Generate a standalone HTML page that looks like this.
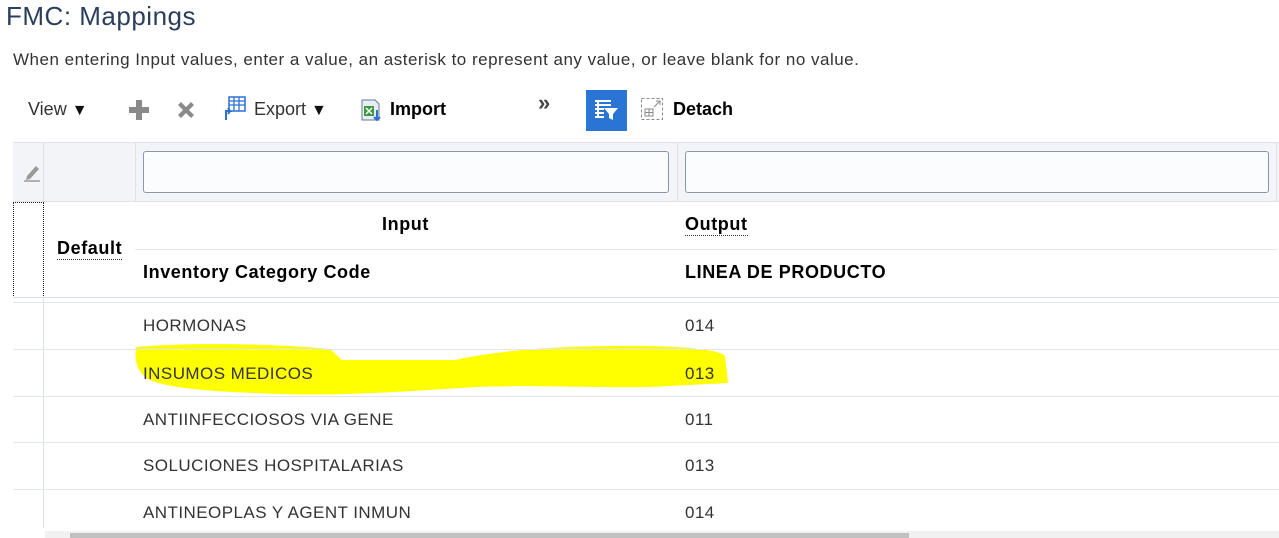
<!DOCTYPE html>
<html><head><meta charset="utf-8"><style>
*{margin:0;padding:0;box-sizing:border-box}
body{width:1279px;height:538px;background:#fff;position:relative;overflow:hidden;font-family:"Liberation Sans",Arial,sans-serif;color:#333}
.a{position:absolute;white-space:nowrap}
.hl{position:absolute;height:1px;background:#e3e7ec}
.vl{position:absolute;width:1px;background:#dde2e8}
.b{font-weight:bold;color:#000}
.hd{font-size:18px;letter-spacing:0.6px}
.d{font-size:17px;letter-spacing:0.45px;color:#333}
</style></head><body>
<div class="a" style="left:6px;top:1px;font-size:26px;letter-spacing:0.5px;color:#2b3f5c">FMC: Mappings</div>
<div class="a" style="left:13px;top:50px;font-size:17px;letter-spacing:0.5px;color:#333">When entering Input values, enter a value, an asterisk to represent any value, or leave blank for no value.</div>

<!-- toolbar -->
<div class="a" style="left:28px;top:99px;font-size:18px;color:#333">View <span style="font-size:16px;color:#111">&#9660;</span></div>
<svg class="a" style="left:127px;top:98px" width="24" height="24" viewBox="0 0 24 24"><path d="M9 2h6v7h7v6h-7v7H9v-7H2V9h7z" fill="#8a8a8a"/></svg>
<svg class="a" style="left:175px;top:99px" width="22" height="22" viewBox="0 0 22 22"><path d="M3 6l3-3 5 5 5-5 3 3-5 5 5 5-3 3-5-5-5 5-3-3 5-5z" fill="#8a8a8a"/></svg>
<svg class="a" style="left:223px;top:96px" width="24" height="26" viewBox="0 0 24 26"><rect x="6" y="1" width="16" height="14" fill="#fff" stroke="#2b6fd6" stroke-width="1.5"/><path d="M6 5h16M6 9h16M11 1v14M16 1v14" stroke="#2b6fd6" stroke-width="1.3"/><path d="M3 24v-9h4l-2-3m2 3l-2 3" stroke="#2b6fd6" stroke-width="2" fill="none"/></svg>
<div class="a" style="left:254px;top:99px;font-size:18px;color:#333">Export <span style="font-size:16px;color:#111">&#9660;</span></div>
<svg class="a" style="left:360px;top:98px" width="24" height="26" viewBox="0 0 24 26"><path d="M2 2h13l4 4v16H2z" fill="#e8eef5" stroke="#6a7a90"/><rect x="4" y="8" width="10" height="10" fill="#3f9a3f"/><path d="M6 10l6 6M12 10l-6 6" stroke="#fff" stroke-width="1.5"/><path d="M17 12v10m-3-3l3 3 3-3" stroke="#2b6fd6" stroke-width="2" fill="none"/></svg>
<div class="a b" style="left:390px;top:99px;font-size:18px">Import</div>
<div class="a" style="left:538px;top:90px;font-size:22px;color:#444;font-weight:bold">&#187;</div>
<div class="a" style="left:586px;top:90px;width:41px;height:41px;background:#2a74d6"></div>
<svg class="a" style="left:594px;top:99px" width="26" height="22" viewBox="0 0 26 22"><path d="M1 2h16M1 6h16M1 10h9M1 14h9M1 18h9M4 2v16" stroke="#fff" stroke-width="2"/><path d="M10 9h14l-5 6v6l-4-2v-4z" fill="#fff"/></svg>
<svg class="a" style="left:640px;top:97px" width="24" height="24" viewBox="0 0 24 24"><rect x="1.5" y="1.5" width="21" height="21" fill="none" stroke="#8a8a8a" stroke-dasharray="3 2"/><rect x="5" y="12" width="8" height="7" fill="none" stroke="#8a8a8a"/><path d="M5 15.5h8M9 12v7M14 10l6-6m-4 0h4v4" stroke="#8a8a8a" fill="none"/></svg>
<div class="a b" style="left:673px;top:99px;font-size:18px">Detach</div>

<!-- filter row -->
<div class="a" style="left:13px;top:142px;width:1266px;height:60px;background:#f2f4f7;border-top:1px solid #dfe3e8;border-bottom:1px solid #dfe3e8"></div>
<div class="vl" style="left:43px;top:142px;height:60px"></div>
<div class="vl" style="left:135px;top:142px;height:60px"></div>
<div class="vl" style="left:677px;top:142px;height:60px"></div>
<div class="vl" style="left:1276px;top:142px;height:60px"></div>
<svg class="a" style="left:22px;top:161px" width="20" height="22" viewBox="0 0 20 22"><path d="M5 15l9-10 3 3-9 10-4 1z" fill="#9a9a9a"/><path d="M2 20h16" stroke="#9a9a9a" stroke-width="1.5"/></svg>
<div class="a" style="left:143px;top:151px;width:526px;height:42px;background:#fbfcfd;border:1px solid #8a97a6;border-radius:3px"></div>
<div class="a" style="left:685px;top:151px;width:584px;height:42px;background:#fbfcfd;border:1px solid #8a97a6;border-radius:3px"></div>

<!-- header -->
<div class="a" style="left:13px;top:202px;width:31px;height:96px;border:1px dotted #222"></div>
<div class="a b hd" style="left:57px;top:238px;border-bottom:1px dotted #333;line-height:21px">Default</div>
<div class="a b hd" style="left:382px;top:214px">Input</div>
<div class="a b hd" style="left:685px;top:214px;border-bottom:1px dotted #333;line-height:21px">Output</div>
<div class="hl" style="left:135px;top:249px;width:1142px"></div>
<div class="a b hd" style="left:143px;top:262px">Inventory Category Code</div>
<div class="a b hd" style="left:685px;top:262px">LINEA DE PRODUCTO</div>
<div class="hl" style="left:13px;top:297px;width:1266px;background:#d8dde3"></div>
<div class="hl" style="left:13px;top:302px;width:1266px"></div>
<div class="vl" style="left:43px;top:297px;height:231px"></div>

<!-- highlight -->
<svg class="a" style="left:130px;top:340px" width="600" height="62" viewBox="0 0 600 62"><path d="M6 7 C60 2,150 4,200 9 L212 20 L325 20 C380 8,450 5,520 6 C560 7,590 10,595 16 L598 43 L520 47 C450 48,380 44,330 48 C270 52,200 56,150 54 C90 52,40 49,20 40 C8 34,4 22,6 7z" fill="#ffff00"/></svg>

<!-- rows -->
<div class="hl" style="left:13px;top:349px;width:1266px"></div>
<div class="hl" style="left:13px;top:396px;width:1266px"></div>
<div class="hl" style="left:13px;top:442px;width:1266px"></div>
<div class="hl" style="left:13px;top:489px;width:1266px"></div>
<div class="a d" style="left:143px;top:316px">HORMONAS</div><div class="a d" style="left:685px;top:316px">014</div>
<div class="a d" style="left:143px;top:364px">INSUMOS MEDICOS</div><div class="a d" style="left:685px;top:364px">013</div>
<div class="a d" style="left:143px;top:410px">ANTIINFECCIOSOS VIA GENE</div><div class="a d" style="left:685px;top:410px">011</div>
<div class="a d" style="left:143px;top:456px">SOLUCIONES HOSPITALARIAS</div><div class="a d" style="left:685px;top:456px">013</div>
<div class="a d" style="left:143px;top:503px">ANTINEOPLAS Y AGENT INMUN</div><div class="a d" style="left:685px;top:503px">014</div>

<!-- scrollbar -->
<div class="a" style="left:45px;top:531px;width:1234px;height:7px;background:#f1f1f1"></div>
<div class="a" style="left:70px;top:533px;width:839px;height:5px;background:#c1c1c1"></div>
</body></html>
